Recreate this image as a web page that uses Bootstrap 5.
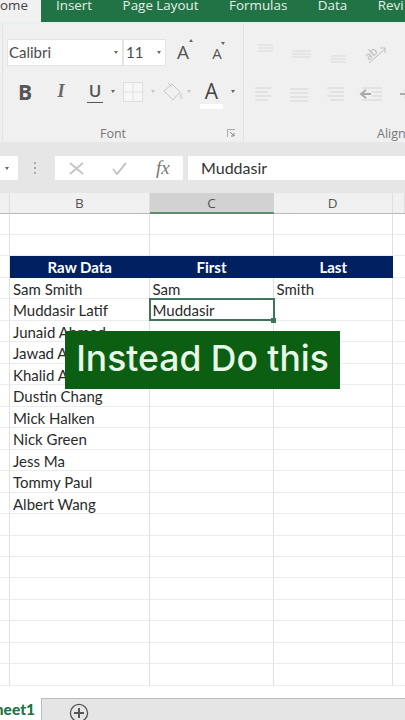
<!DOCTYPE html>
<html lang="en">
<head>
<meta charset="utf-8">
<title>Excel: Instead Do this</title>
<link rel="stylesheet" href="https://cdn.jsdelivr.net/npm/bootstrap@5.3.0/dist/css/bootstrap.min.css">
<style>
html,body{margin:0;background:#fff;}
.xl-page{width:405px;height:720px;overflow:hidden;position:relative;font-family:Lato,"Liberation Sans",sans-serif;color:#222;}
.xl-tabs{height:24px;background:#217346;border-bottom:2px solid #e9f0eb;gap:30.5px;flex:none;overflow:hidden;}
.xl-tabs span{font:13.4px/11px "Open Sans",sans-serif;color:#e4f0e8;white-space:nowrap;}
.xl-tabs .xl-home{width:41px;height:22px;background:#f1f1f1;color:#444;text-align:right;padding-right:16px;margin-right:-15.5px;}
.xl-ribbon{height:118px;background:#f0f0f0;flex:none;overflow:hidden;}
.xl-font-group{width:242px;margin-left:2px;border-left:1px solid #e2e2e2;border-right:1px solid #e2e2e2;height:118px;flex:none;padding-left:4px;}
.xl-align-group{padding-left:9px;height:118px;position:relative;flex:1;}
.xl-tool-a{height:45px;padding-top:15px;}
.xl-tool-b{height:40px;padding-top:12px;margin-top:1px;}
.xl-box{height:27px;background:#fff;border:1px solid #e4e4e4;font-size:15px;line-height:25px;padding-left:1px;color:#4a4a4a;}
.xl-box-name{width:116px;}
.xl-box-size{width:43px;padding-left:2px;}
.xl-caret{width:0;height:0;border-left:2.5px solid transparent;border-right:2.5px solid transparent;border-top:3px solid #666;display:inline-block;flex:none;}
.xl-caret-up{border-top:0;border-bottom:3px solid #666;}
.xl-caret-pale{border-top-color:#c4c4c4;}
.xl-glyph{font-family:"Open Sans",sans-serif;color:#555;line-height:1;text-align:center;}
.xl-grow{position:relative;font-size:19px;width:20px;margin-left:7px;margin-top:4px;}
.xl-shrink{position:relative;font-size:15px;width:16px;margin-left:16px;margin-top:7px;}
.xl-grow .xl-caret,.xl-shrink .xl-caret{position:absolute;right:0;top:-4px;}
.xl-bold{font-size:21px;font-weight:700;width:18px;margin-left:9px;}
.xl-ital{font-size:18px;font-weight:700;font-style:italic;width:18px;margin-left:18px;font-family:"Liberation Serif",serif;color:#666;}
.xl-under{font-size:17px;font-weight:600;width:16px;margin-left:17px;border-bottom:1px solid #555;height:21px;}
.xl-color{font-size:21px;width:23px;margin-left:9px;border-bottom:5px solid #fff;height:28px;color:#444;margin-top:-1px;}
.xl-label{font-family:"Open Sans",sans-serif;font-size:12.5px;color:#777;text-align:center;height:20px;line-height:20px;margin-top:14px;padding-right:24px;position:relative;}
.xl-launch{position:absolute;right:7px;top:5px;}
.xl-label-align{position:absolute;left:133px;top:100px;margin:0;padding:0;white-space:nowrap;}
.xl-formula{height:51px;background:#e6e6e6;flex:none;padding-top:14px;}
.xl-input{height:24px;background:#fff;}
.xl-namebox{width:18px;padding-left:5px;}
.xl-dots{width:37px;justify-content:center;gap:3px;padding-right:3px;height:24px;}
.xl-dots i{width:2px;height:2px;background:#aaa;display:block;}
.xl-fxbox{width:128px;padding-left:14px;}
.xl-check{margin-left:28px;}
.xl-fx{font:italic 19px "Liberation Serif",serif;color:#777;margin-left:29px;}
.xl-fbox{flex:1;margin-left:5px;padding-left:13px;font-size:16px;line-height:24px;color:#333;}
.xl-sheet{flex:1;overflow:hidden;min-height:0;}
.xl-head{height:20.5px;background:#f0f0f0;border-bottom:1px solid #b9b9b9;font-family:"Open Sans",sans-serif;font-size:13.5px;color:#555;}
.xl-c0{width:10px;flex:none;}
.xl-c1{width:139.5px;flex:none;}
.xl-c2{width:124px;flex:none;}
.xl-c3{width:119.5px;flex:none;}
.xl-c4{flex:1;}
.xl-head>div{text-align:center;line-height:20px;border-right:1px solid #dedede;}
.xl-head .xl-hot{background:#d2d2d2;border-bottom:2px solid #5d8c70;height:20.5px;border-right:0;}
.xl-line{height:21.47px;display:flex;font-size:15px;line-height:23px;color:#2a2a2a;white-space:nowrap;}
.xl-line>div{border-bottom:1px solid #ececec;border-right:1px solid #e0e0e0;padding-left:3px;height:21.47px;overflow:visible;position:relative;}
.xl-line>.xl-c3~.xl-c4{border-right:0;}
.xl-line .xl-navy{background:#002060;color:#fff;font-weight:700;text-align:center;padding:0;border:0;font-size:15px;line-height:23.5px;}
.xl-line>.xl-active{z-index:2;}
.xl-active::after{content:"";position:absolute;left:-1px;right:-2px;top:-1px;bottom:-1px;border:2px solid #3f7558;}
.xl-handle{position:absolute;right:-3px;bottom:-3px;width:5px;height:5px;background:#3f7558;z-index:1;}
.xl-bar{height:22px;flex:none;overflow:hidden;}
.xl-sheetname{width:41px;flex:none;background:#fff;color:#217346;font-weight:900;font-size:15.5px;line-height:22px;text-align:right;padding-right:6px;white-space:nowrap;direction:rtl;overflow:hidden;}
.xl-barfill{flex:1;background:#e5e5e5;border-top:1px solid #bbb;border-left:1px solid #bbb;padding-left:27px;}
.xl-banner{position:absolute;left:65px;top:331px;width:275px;height:58px;background:#0b5e12;color:#e6f8e6;font-family:Inter,sans-serif;font-weight:500;font-size:35.5px;line-height:56px;text-align:center;white-space:nowrap;}
</style>
</head>
<body>
<div class="xl-page d-flex flex-column">
  <div class="xl-tabs d-flex align-items-start">
    <span class="xl-home">ome</span><span>Insert</span><span>Page Layout</span><span>Formulas</span><span>Data</span><span>Revi</span>
  </div>

  <div class="xl-ribbon d-flex">
    <div class="xl-font-group">
      <div class="xl-tool-a d-flex align-items-start">
        <div class="xl-box xl-box-name d-flex align-items-center justify-content-between"><span>Calibri</span><i class="xl-caret me-1"></i></div>
        <div class="xl-box xl-box-size d-flex align-items-center justify-content-between"><span>11</span><i class="xl-caret me-1"></i></div>
        <div class="xl-glyph xl-grow">A<i class="xl-caret xl-caret-up"></i></div>
        <div class="xl-glyph xl-shrink">A<i class="xl-caret"></i></div>
      </div>
      <div class="xl-tool-b d-flex align-items-start">
        <div class="xl-glyph xl-bold">B</div>
        <div class="xl-glyph xl-ital">I</div>
        <div class="xl-glyph xl-under">U</div>
        <i class="xl-caret ms-2 mt-2"></i>
        <svg class="ms-2" width="20" height="20" viewBox="0 0 20 20"><rect x=".5" y=".5" width="19" height="19" fill="#f6f6f6" stroke="#dedede"/><path d="M10 1v18M1 10h18" stroke="#e2e2e2"/></svg>
        <i class="xl-caret xl-caret-pale ms-2 mt-2"></i>
        <svg class="ms-2" width="20" height="20" viewBox="0 0 20 20" fill="none" stroke="#c8c8c8"><path d="M1 9 9 2l8 8-7 8z"/><path d="M5 1 9 5"/><path d="M18 11v6" stroke-width="3" stroke="#dedede"/></svg>
        <i class="xl-caret xl-caret-pale ms-1 mt-2"></i>
        <div class="xl-glyph xl-color">A</div>
        <i class="xl-caret ms-2 mt-2"></i>
      </div>
      <div class="xl-label">Font
        <svg class="xl-launch" width="9" height="9" viewBox="0 0 9 9" fill="none" stroke="#aaa"><path d="M.5 8V.5H8"/><path d="M3 3l4 4M7 4v3H4" stroke="#888"/></svg>
      </div>
    </div>
    <div class="xl-align-group">
      <div class="xl-tool-a d-flex align-items-start gap-3">
        <svg width="136" height="30" viewBox="0 0 136 30" fill="none" stroke="#d8d8d8"><path d="M5 6h15M5 9h15M5 12h15M39 12h19M39 15h19M39 18h19M78 17h15M78 20h15M78 23h15"/><path d="M116 24l16-14M127 9h5v5" stroke="#bbb"/><text x="112" y="20" font-size="12" fill="#bbb" stroke="none" transform="rotate(-42 116 16)">ab</text></svg>
        <i class="xl-caret xl-caret-pale mt-3"></i>
      </div>
      <div class="xl-tool-b">
        <svg width="160" height="20" viewBox="0 0 160 20" fill="none" stroke="#d4d4d4"><path d="M2 2h16M2 6h13M2 10h16M2 14h13M37 3h18M37 7h18M37 11h18M37 15h18M74 2h17M77 6h14M74 10h17M77 14h14M109 2h20M119 6h10M119 10h10M109 14h20"/><path d="M109 8h9M113 4l-5 4 5 4M147 8h9M152 4l5 4-5 4" stroke="#aaa" stroke-width="2"/></svg>
      </div>
      <div class="xl-label xl-label-align">Align</div>
    </div>
  </div>

  <div class="xl-formula d-flex align-items-start">
    <div class="xl-input xl-namebox d-flex align-items-center"><i class="xl-caret"></i></div>
    <div class="xl-dots d-flex flex-column align-items-center"><i></i><i></i><i></i></div>
    <div class="xl-input xl-fxbox d-flex align-items-center">
      <svg width="15" height="13" viewBox="0 0 15 13" fill="none" stroke="#c6c6c6" stroke-width="2"><path d="M1 1l13 11M14 1 1 12"/></svg>
      <svg class="xl-check" width="15" height="13" viewBox="0 0 15 13" fill="none" stroke="#c6c6c6" stroke-width="2"><path d="M1 7l4 5L14 1"/></svg>
      <span class="xl-fx">fx</span>
    </div>
    <div class="xl-input xl-fbox">Muddasir</div>
  </div>

  <div class="xl-sheet">
    <div class="xl-head d-flex">
      <div class="xl-c0"></div><div class="xl-c1">B</div><div class="xl-c2 xl-hot">C</div><div class="xl-c3">D</div><div class="xl-c4"></div>
    </div>
    <div class="xl-line"><div class="xl-c0"></div><div class="xl-c1"></div><div class="xl-c2"></div><div class="xl-c3"></div><div class="xl-c4"></div></div>
    <div class="xl-line"><div class="xl-c0"></div><div class="xl-c1"></div><div class="xl-c2"></div><div class="xl-c3"></div><div class="xl-c4"></div></div>
    <div class="xl-line"><div class="xl-c0"></div><div class="xl-c1 xl-navy">Raw Data</div><div class="xl-c2 xl-navy">First</div><div class="xl-c3 xl-navy">Last</div><div class="xl-c4"></div></div>
    <div class="xl-line"><div class="xl-c0"></div><div class="xl-c1">Sam Smith</div><div class="xl-c2">Sam</div><div class="xl-c3">Smith</div><div class="xl-c4"></div></div>
    <div class="xl-line"><div class="xl-c0"></div><div class="xl-c1">Muddasir Latif</div><div class="xl-c2 xl-active">Muddasir<i class="xl-handle"></i></div><div class="xl-c3"></div><div class="xl-c4"></div></div>
    <div class="xl-line"><div class="xl-c0"></div><div class="xl-c1">Junaid Ahmed</div><div class="xl-c2"></div><div class="xl-c3"></div><div class="xl-c4"></div></div>
    <div class="xl-line"><div class="xl-c0"></div><div class="xl-c1">Jawad A</div><div class="xl-c2"></div><div class="xl-c3"></div><div class="xl-c4"></div></div>
    <div class="xl-line"><div class="xl-c0"></div><div class="xl-c1">Khalid A</div><div class="xl-c2"></div><div class="xl-c3"></div><div class="xl-c4"></div></div>
    <div class="xl-line"><div class="xl-c0"></div><div class="xl-c1">Dustin Chang</div><div class="xl-c2"></div><div class="xl-c3"></div><div class="xl-c4"></div></div>
    <div class="xl-line"><div class="xl-c0"></div><div class="xl-c1">Mick Halken</div><div class="xl-c2"></div><div class="xl-c3"></div><div class="xl-c4"></div></div>
    <div class="xl-line"><div class="xl-c0"></div><div class="xl-c1">Nick Green</div><div class="xl-c2"></div><div class="xl-c3"></div><div class="xl-c4"></div></div>
    <div class="xl-line"><div class="xl-c0"></div><div class="xl-c1">Jess Ma</div><div class="xl-c2"></div><div class="xl-c3"></div><div class="xl-c4"></div></div>
    <div class="xl-line"><div class="xl-c0"></div><div class="xl-c1">Tommy Paul</div><div class="xl-c2"></div><div class="xl-c3"></div><div class="xl-c4"></div></div>
    <div class="xl-line"><div class="xl-c0"></div><div class="xl-c1">Albert Wang</div><div class="xl-c2"></div><div class="xl-c3"></div><div class="xl-c4"></div></div>
    <div class="xl-line"><div class="xl-c0"></div><div class="xl-c1"></div><div class="xl-c2"></div><div class="xl-c3"></div><div class="xl-c4"></div></div>
    <div class="xl-line"><div class="xl-c0"></div><div class="xl-c1"></div><div class="xl-c2"></div><div class="xl-c3"></div><div class="xl-c4"></div></div>
    <div class="xl-line"><div class="xl-c0"></div><div class="xl-c1"></div><div class="xl-c2"></div><div class="xl-c3"></div><div class="xl-c4"></div></div>
    <div class="xl-line"><div class="xl-c0"></div><div class="xl-c1"></div><div class="xl-c2"></div><div class="xl-c3"></div><div class="xl-c4"></div></div>
    <div class="xl-line"><div class="xl-c0"></div><div class="xl-c1"></div><div class="xl-c2"></div><div class="xl-c3"></div><div class="xl-c4"></div></div>
    <div class="xl-line"><div class="xl-c0"></div><div class="xl-c1"></div><div class="xl-c2"></div><div class="xl-c3"></div><div class="xl-c4"></div></div>
    <div class="xl-line"><div class="xl-c0"></div><div class="xl-c1"></div><div class="xl-c2"></div><div class="xl-c3"></div><div class="xl-c4"></div></div>
    <div class="xl-line"><div class="xl-c0"></div><div class="xl-c1"></div><div class="xl-c2"></div><div class="xl-c3"></div><div class="xl-c4"></div></div>
  </div>

  <div class="xl-bar d-flex">
    <div class="xl-sheetname">Sheet1</div>
    <div class="xl-barfill">
      <svg width="20" height="20" viewBox="0 0 20 20" fill="none" stroke="#555"><circle cx="10" cy="10" r="8.6" stroke-width="1.3"/><path d="M10 5v10M5 10h10" stroke-width="2"/></svg>
    </div>
  </div>

  <div class="xl-banner">Instead Do this</div>
</div>
<script src="https://cdn.jsdelivr.net/npm/bootstrap@5.3.0/dist/js/bootstrap.bundle.min.js"></script>
</body>
</html>
